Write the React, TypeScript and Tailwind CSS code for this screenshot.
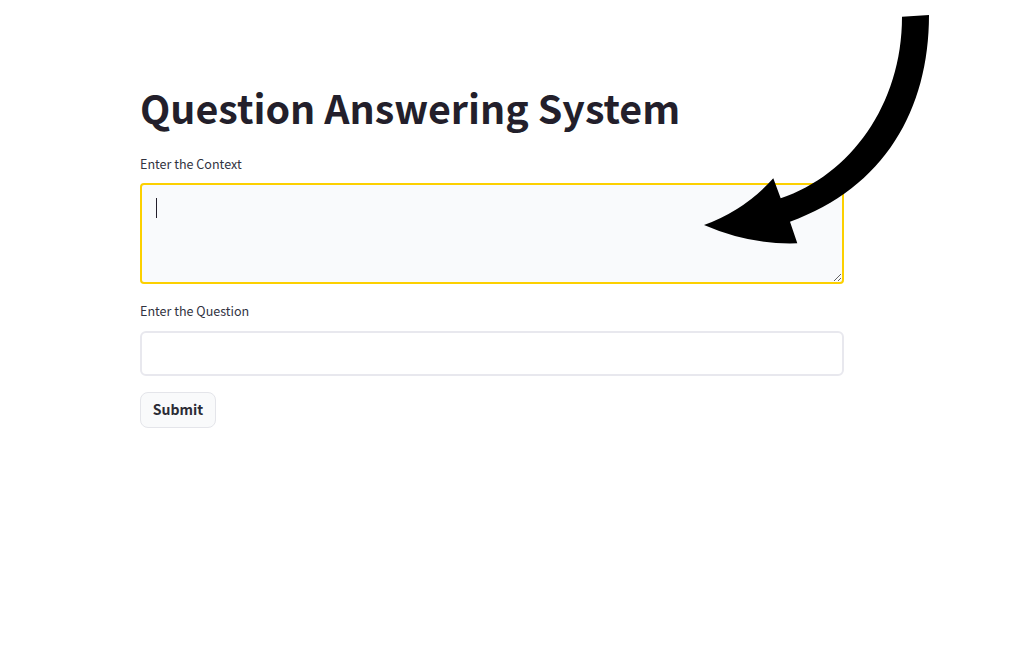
export default function App() {
  return (
    <div className="relative min-h-[666px] bg-white pl-[140px] pt-[80px] text-[#262730] overflow-hidden font-['Noto_Sans_CJK_SC','Noto_Sans',sans-serif]">
      <div className="flex w-[704px] flex-col items-start">
        <h1 className="text-[39.4px] font-bold leading-[58px] -mt-[2px] text-[#231f2b]">Question Answering System</h1>
        <label className="mt-[18px] text-[12.55px] leading-[20px] text-[#31333f]">Enter the Context</label>
        <div className="relative mt-[9px] h-[101px] w-full">
          <textarea
            aria-label="Enter the Context"
            className="block h-[101px] w-full resize-y rounded-[4px] border-2 border-[#fcd000] bg-[#f9fafc] outline-none"
          />
          <span className="absolute left-[16px] top-[15px] h-[20px] w-px bg-[#231f2b]" />
        </div>
        <label className="mt-[17px] text-[12.55px] leading-[20px] text-[#31333f]">Enter the Question</label>
        <input
          aria-label="Enter the Question"
          className="mt-[10px] h-[45px] w-full rounded-[6px] border-2 border-[#e8e8ee] bg-white outline-none"
        />
        <button className="mt-[16px] h-[36px] w-[76px] rounded-[8px] border border-[#e4e5ea] bg-[#f9fafb] pb-[2px] text-[14px] font-bold text-[#2b2b35]">
          Submit
        </button>
      </div>
      <svg className="absolute left-0 top-0 pointer-events-none" width="1027" height="300" viewBox="0 0 1027 300">
        <path
          d="M929 15 C929 110 884 188 790 221.7 L797.3 243.3 Q750 245 704 225 Q745 210 773.3 178.3 L780.7 198.3 C850 175 902 105 902 16.7 Z"
          fill="#000"
        />
      </svg>
    </div>
  );
}
